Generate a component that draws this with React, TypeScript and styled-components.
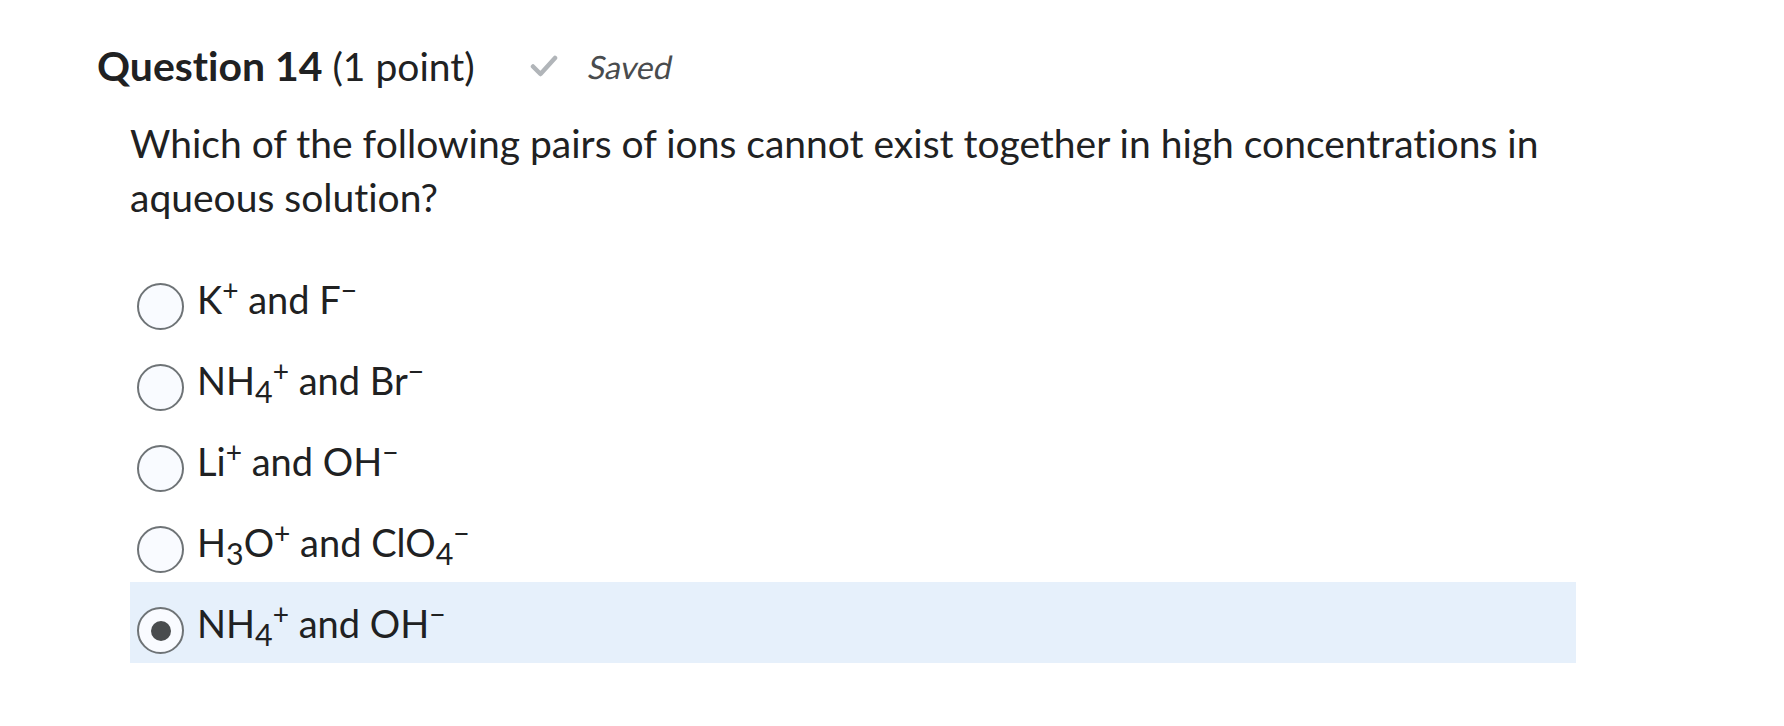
import React, { useState } from 'react';
import styled, { createGlobalStyle } from 'styled-components';

const GlobalStyle = createGlobalStyle`
  html, body {
    margin: 0;
    padding: 0;
    background: #ffffff;
  }
  body {
    font-family: Lato, "Open Sans", sans-serif;
    color: #202122;
    font-variant-ligatures: none;
  }
`;

const Page = styled.div`
  padding: 44px 0 0 97px;
  width: 1480px;
`;

const Header = styled.div`
  display: flex;
  align-items: center;
  height: 44px;
`;

const Title = styled.h2`
  margin: 0;
  font-size: 39px;
  line-height: 44px;
  font-weight: 400;
  color: #202122;
`;

const Strong = styled.span`
  font-weight: 700;
  font-size: 1.05em;
`;

const SavedStatus = styled.div`
  display: flex;
  align-items: center;
  margin-left: 55px;
  gap: 31px;
  color: #494c4e;
  font-size: 32px;
`;

// the reference slants the upright face rather than using a true italic
const Slanted = styled.span`
  display: inline-block;
  transform: skewX(-11deg);
`;

const Body = styled.div`
  margin-left: 33px;
  margin-top: 28px;
`;

const QuestionText = styled.p`
  margin: 0;
  font-size: 39px;
  line-height: 54px;
  color: #202122;
  max-width: 1440px;
`;

const Options = styled.div`
  margin-top: 34px;
  display: flex;
  flex-direction: column;
  width: 1446px;
`;

const Option = styled.label<{ $selected: boolean }>`
  display: flex;
  align-items: center;
  height: 81px;
  padding-left: 7px;
  background: ${({ $selected }) => ($selected ? '#e6f0fb' : 'transparent')};
  cursor: pointer;
`;

const Radio = styled.span<{ $checked: boolean }>`
  box-sizing: border-box;
  width: 47px;
  height: 47px;
  margin-top: 16px;
  border-radius: 50%;
  border: 2px solid #6e7376;
  background: #f9fbff;
  display: flex;
  align-items: center;
  justify-content: center;
  flex-shrink: 0;

  &::after {
    content: '';
    display: ${({ $checked }) => ($checked ? 'block' : 'none')};
    width: 20px;
    height: 20px;
    border-radius: 50%;
    background: #494c4e;
  }
`;

const OptionText = styled.span`
  margin-left: 13px;
  font-size: 38px;
  line-height: 54px;
  color: #202122;
`;

const Sup = styled.sup`
  font-size: 0.74em;
  line-height: 0;
  vertical-align: 0.48em;
`;

const Sub = styled.sub`
  font-size: 0.8em;
  line-height: 0;
  vertical-align: -0.26em;
`;

const CheckIcon = () => (
  <svg width="28" height="22" viewBox="0 0 28 22">
    <path d="M3 11.5 L10.5 19 L25 3" fill="none" stroke="#b1b5b9" strokeWidth="4.5" strokeLinecap="round" strokeLinejoin="round" />
  </svg>
);

const answers: React.ReactNode[] = [
  <>K<Sup>+</Sup> and F<Sup>−</Sup></>,
  <>NH<Sub>4</Sub><Sup>+</Sup> and Br<Sup>−</Sup></>,
  <>Li<Sup>+</Sup> and OH<Sup>−</Sup></>,
  <>H<Sub>3</Sub>O<Sup>+</Sup> and ClO<Sub>4</Sub><Sup>−</Sup></>,
  <>NH<Sub>4</Sub><Sup>+</Sup> and OH<Sup>−</Sup></>,
];

const App: React.FC = () => {
  const [selected, setSelected] = useState(4);

  return (
    <>
      <GlobalStyle />
      <Page>
        <Header>
          <Title>
            <Strong>Question 14</Strong> (1 point)
          </Title>
          <SavedStatus>
            <CheckIcon />
            <Slanted>Saved</Slanted>
          </SavedStatus>
        </Header>
        <Body>
          <QuestionText>
            Which of the following pairs of ions cannot exist together in high concentrations in aqueous solution?
          </QuestionText>
          <Options>
            {answers.map((a, i) => (
              <Option key={i} $selected={selected === i} onClick={() => setSelected(i)}>
                <Radio $checked={selected === i} />
                <OptionText>{a}</OptionText>
              </Option>
            ))}
          </Options>
        </Body>
      </Page>
    </>
  );
};

export default App;
